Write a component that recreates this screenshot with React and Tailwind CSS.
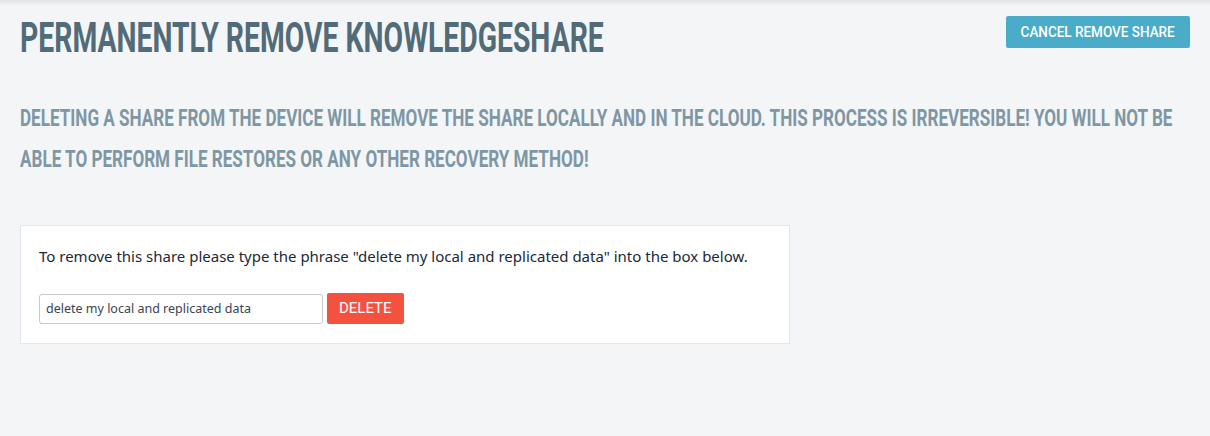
export default function App() {
  const cond = { fontFamily: '"Roboto", "Liberation Sans", sans-serif' };
  return (
    <div className="relative min-h-[436px] w-full bg-[#f4f5f7] overflow-hidden" style={{ fontFamily: '"Noto Sans", "Open Sans", sans-serif' }}>
      <div className="absolute inset-x-0 top-0 h-[6px] bg-gradient-to-b from-[#e2e3e5] to-[#f4f5f7]" />
      <div className="relative px-5 pt-4">
        <div className="flex items-start justify-between">
          <h1 className="inline-block origin-left scale-x-[0.675] whitespace-nowrap text-[42px] leading-[44px] font-bold text-[#526b78]" style={cond}>
            PERMANENTLY REMOVE KNOWLEDGESHARE
          </h1>
          <button className="flex h-[32px] w-[184px] items-center justify-center rounded-[2px] bg-[#4aacc9] text-white" style={cond}>
            <span className="inline-block scale-x-[0.9] whitespace-nowrap text-[15px] font-medium">CANCEL REMOVE SHARE</span>
          </button>
        </div>
        <p className="mt-[38px] origin-left scale-x-[0.712] whitespace-nowrap text-[24px] leading-[41px] font-bold text-[#7e97a4]" style={cond}>
          DELETING A SHARE FROM THE DEVICE WILL REMOVE THE SHARE LOCALLY AND IN THE CLOUD. THIS PROCESS IS IRREVERSIBLE! YOU WILL NOT BE
          <br />
          ABLE TO PERFORM FILE RESTORES OR ANY OTHER RECOVERY METHOD!
        </p>
        <div className="mt-[45px] w-[770px] border border-[#e3e6ea] bg-white px-[18px] pt-[20px] pb-[19px]">
          <p className="text-[15px] leading-[20px] text-[#1b2939]">
            To remove this share please type the phrase "delete my local and replicated data" into the box below.
          </p>
          <div className="mt-[27px] flex items-center gap-[4px]">
            <input
              readOnly
              value="delete my local and replicated data"
              className="h-[30px] w-[284px] rounded-[3px] border border-[#c8c8c8] px-[6px] text-[12.5px] text-[#3a4550] outline-none"
            />
            <button className="h-[31px] rounded-[2px] bg-[#f4523f] px-[12px] text-[15px] text-white" style={cond}>
              DELETE
            </button>
          </div>
        </div>
      </div>
    </div>
  );
}
